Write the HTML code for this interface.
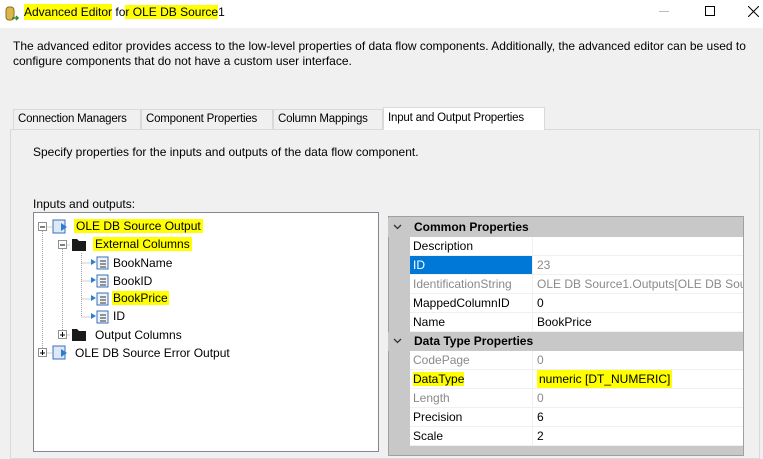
<!DOCTYPE html>
<html><head><style>
*{margin:0;padding:0;box-sizing:border-box}
body{width:763px;height:448px;overflow:hidden;background:#f0f0f0;font-family:"Liberation Sans",sans-serif;font-size:12px;color:#000;position:relative}
.abs{position:absolute;white-space:nowrap}
.hl{background:#ffff00}
.tab{position:absolute;top:109px;height:20px;border:1px solid #d9d9d9;border-bottom:none;padding:3px 4px;background:#f0f0f0;font-size:11.5px;white-space:nowrap;overflow:hidden;letter-spacing:-0.2px}
.row{position:absolute;left:410px;width:333px;height:19px;border-bottom:1px solid #f0f0f0;background:#fff;white-space:nowrap}
.row .n{position:absolute;left:0;width:123px;height:18px;padding:2px 3px;border-right:1px solid #f0f0f0}
.row .v{position:absolute;left:124px;padding:2px 3px}
.g{color:#8a8a8a}
.hdr{position:absolute;left:388px;width:355px;height:19px;background:#c8c8c8;font-weight:bold;padding:2px 26px}
.tl{position:absolute;font-size:12px;white-space:nowrap}
</style></head><body>
<div class="abs" style="left:0;top:0;width:763px;height:28px;background:#fff"></div>
<svg class="abs" style="left:5px;top:5px" width="16" height="18"><rect x="1" y="2" width="8" height="13" rx="3" fill="#d9b84a" stroke="#8a6d1c"/><path d="M7 13h6M11 11l2 2-2 2" stroke="#2e8b2e" stroke-width="1.5" fill="none"/></svg>
<div class="abs" style="left:24px;top:5px;font-size:12px"><span class="hl" style="padding:1px 0">Advanced Editor</span> fo<span class="hl">r OLE DB Source</span>1</div>
<div class="abs" style="left:659px;top:11px;width:10px;height:1px;background:#bbb"></div>
<div class="abs" style="left:705px;top:6px;width:10px;height:10px;border:1px solid #000"></div>
<svg class="abs" style="left:748px;top:6px" width="11" height="11"><path d="M0 0L11 11M11 0L0 11" stroke="#000"/></svg>
<div class="abs" style="left:13px;top:39px;line-height:15px">The advanced editor provides access to the low-level properties of data flow components. Additionally, the advanced editor can be used to<br>configure components that do not have a custom user interface.</div>
<div class="abs" style="left:10px;top:129px;width:750px;height:330px;border:1px solid #d9d9d9"></div>
<div class="tab" style="left:13px;width:128px">Connection Managers</div>
<div class="tab" style="left:141px;width:132px">Component Properties</div>
<div class="tab" style="left:273px;width:110px">Column Mappings</div>
<div class="tab" style="left:383px;top:107px;height:23px;width:162px;background:#fff;padding-top:4px">Input and Output Properties</div>
<div class="abs" style="left:33px;top:145px">Specify properties for the inputs and outputs of the data flow component.</div>
<div class="abs" style="left:33px;top:197px">Inputs and outputs:</div>
<div class="abs" style="left:33px;top:212px;width:346px;height:240px;background:#fff;border:1px solid #828790"></div>
<svg class="abs" style="left:33px;top:212px" width="346" height="236">
<g stroke="#a0a0a0" stroke-dasharray="1 1" fill="none">
<path d="M9.5 15v126M9.5 15h10M9.5 141h10M29.5 33v90M29.5 33h8M29.5 123h8M48.5 41v64M48.5 51h10M48.5 69h10M48.5 87h10M48.5 105h10"/>
</g>
<g fill="#fff" stroke="#909090"><rect x="5.5" y="10.5" width="8" height="8"/><rect x="25.5" y="28.5" width="8" height="8"/><rect x="25.5" y="118.5" width="8" height="8"/><rect x="5.5" y="136.5" width="8" height="8"/></g>
<path d="M7 15h5M27 33h5M27 123h5M29.5 120v5M7 141h5M9.5 138v5" stroke="#000"/>
<g><rect x="20" y="8" width="12" height="13" fill="#dfe8f5" stroke="#3a6fb7"/><path d="M28 11l6 4-6 4z" fill="#2a7fd4"/><rect x="20" y="134" width="12" height="13" fill="#dfe8f5" stroke="#3a6fb7"/><path d="M28 137l6 4-6 4z" fill="#2a7fd4"/></g>
<g fill="#1a1a1a"><path d="M39 27h5l2 2h7v10h-14z"/><path d="M39 117h5l2 2h7v10h-14z"/></g>
<g><g id="c"><rect x="64" y="45" width="11" height="12" fill="#eef3fa" stroke="#3a6fb7"/><path d="M67 49h6M67 52h6M67 55h6" stroke="#333"/><path d="M58 47l5 3-5 3z" fill="#2a7fd4"/></g>
<use href="#c" y="18"/><use href="#c" y="36"/><use href="#c" y="54"/></g>
</svg>
<div class="tl hl" style="left:74px;top:219px;padding:0 2px">OLE DB Source Output</div>
<div class="tl hl" style="left:93px;top:237px;padding:0 2px">External Columns</div>
<div class="tl" style="left:113px;top:256px">BookName</div>
<div class="tl" style="left:113px;top:274px">BookID</div>
<div class="tl hl" style="left:112px;top:291px;padding:0 1px">BookPrice</div>
<div class="tl" style="left:113px;top:309px">ID</div>
<div class="tl" style="left:95px;top:328px">Output Columns</div>
<div class="tl" style="left:75px;top:346px">OLE DB Source Error Output</div>
<div class="abs" style="left:388px;top:216px;width:356px;height:240px;background:#c8c8c8;border:1px solid #a0a0a0"></div>
<div class="hdr" style="top:218px">Common Properties</div>
<svg class="abs" style="left:393px;top:224px" width="9" height="6"><path d="M1 1l3.5 3.5L8 1" stroke="#333" stroke-width="1.3" fill="none"/></svg>
<div class="row" style="top:237px"><div class="n">Description</div><div class="v"></div></div>
<div class="row" style="top:256px"><div class="n" style="background:#0078d7;color:#fff">ID</div><div class="v g">23</div></div>
<div class="row" style="top:275px;overflow:hidden"><div class="n g">IdentificationString</div><div class="v g">OLE DB Source1.Outputs[OLE DB Sourc</div></div>
<div class="row" style="top:294px"><div class="n">MappedColumnID</div><div class="v">0</div></div>
<div class="row" style="top:313px"><div class="n">Name</div><div class="v">BookPrice</div></div>
<div class="hdr" style="top:332px">Data Type Properties</div>
<svg class="abs" style="left:393px;top:338px" width="9" height="6"><path d="M1 1l3.5 3.5L8 1" stroke="#333" stroke-width="1.3" fill="none"/></svg>
<div class="row" style="top:351px"><div class="n g">CodePage</div><div class="v g">0</div></div>
<div class="row" style="top:370px"><div class="n"><span class="hl">DataType</span></div><div class="v"><span class="hl" style="padding:2px 2px">numeric [DT_NUMERIC]</span></div></div>
<div class="row" style="top:389px"><div class="n g">Length</div><div class="v g">0</div></div>
<div class="row" style="top:408px"><div class="n">Precision</div><div class="v">6</div></div>
<div class="row" style="top:427px"><div class="n">Scale</div><div class="v">2</div></div>
</body></html>
